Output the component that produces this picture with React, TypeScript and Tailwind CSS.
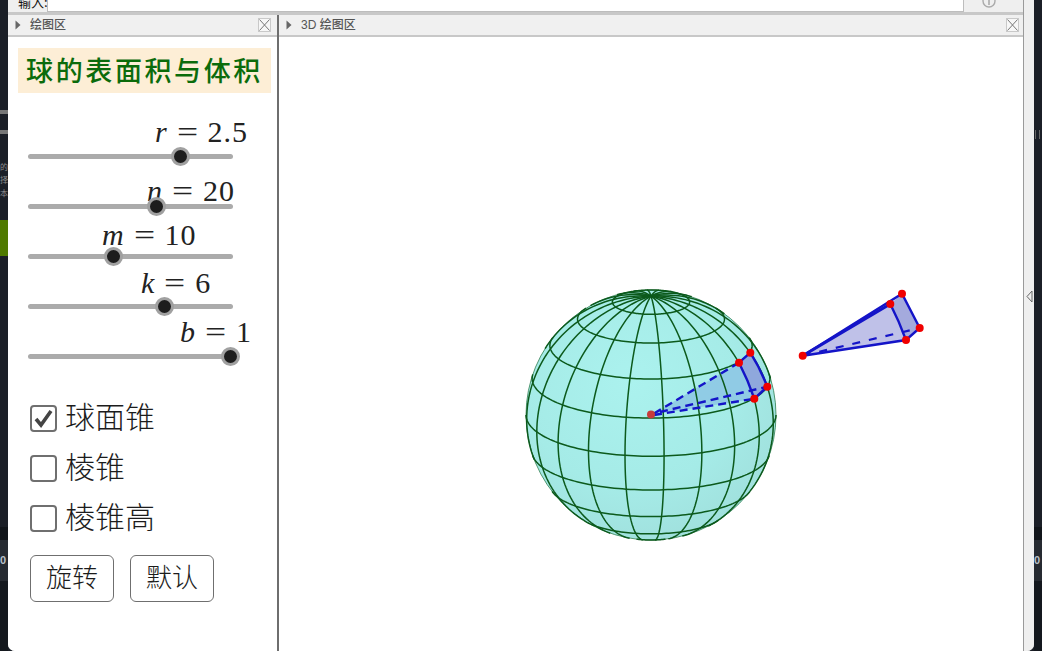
const CJK = "font-['Liberation_Serif','Noto_Sans_CJK_SC',serif]";

const R = 125;
const CX = 651;
const CY = 415;
const E = (17.8 * Math.PI) / 180;

function project(lat: number, lon: number) {
  const la = (lat * Math.PI) / 180;
  const lo = (lon * Math.PI) / 180;
  const x = Math.cos(la) * Math.sin(lo);
  const h = Math.sin(la);
  const d = Math.cos(la) * Math.cos(lo);
  const sy = d * Math.sin(E) - h * Math.cos(E);
  const depth = d * Math.cos(E) + h * Math.sin(E);
  const warp = 3.5 * (1 - sy * sy) * Math.max(depth, 0);
  return { x: CX + R * x, y: CY + R * sy + warp, depth };
}

function curve(samples: [number, number][]) {
  let out = "";
  let pen = false;
  for (const [lat, lon] of samples) {
    const p = project(lat, lon);
    if (p.depth >= -0.02) {
      out += `${pen ? "L" : "M"}${p.x.toFixed(2)} ${p.y.toFixed(2)}`;
      pen = true;
    } else pen = false;
  }
  return out;
}

const grid: string[] = [];
for (let k = 0; k < 20; k++) {
  const lon = 6 + 18 * k;
  const s: [number, number][] = [];
  for (let lat = 90; lat >= -90; lat -= 2) s.push([lat, lon]);
  grid.push(curve(s));
}
for (let lat = -72; lat <= 72; lat += 18) {
  const s: [number, number][] = [];
  for (let lon = -180; lon <= 180; lon += 2) s.push([lat, lon]);
  grid.push(curve(s));
}

const BLUE = "#1414c8";

function Dot({ x, y }: { x: number; y: number }) {
  return <circle cx={x} cy={y} r="4" fill="#f00000" />;
}

function Scene() {
  return (
    <svg viewBox="279 37 744 614" className="block w-full h-full">
      <defs>
        <radialGradient id="ball" cx="42%" cy="36%" r="72%">
          <stop offset="0%" stopColor="#abf2ee" />
          <stop offset="60%" stopColor="#a5ebe7" />
          <stop offset="100%" stopColor="#9fdedb" />
        </radialGradient>
      </defs>
      <circle cx={CX} cy={CY} r={R} fill="url(#ball)" stroke="#2f7d4f" strokeWidth="0.8" />
      {/* inner cone fill */}
      <polygon points="651,415 739,362.7 754.3,398.7" fill="#8cc6e4" fillOpacity="0.85" />
      <polygon points="739,362.7 750.3,352.7 767.3,386.7 754.3,398.7" fill="#8fa8dc" />
      <g fill="none" stroke="#0c5a1c" strokeWidth="1.5">
        {grid.map((d, i) => (
          <path key={i} d={d} />
        ))}
      </g>
      <polygon points="739,362.7 750.3,352.7 767.3,386.7 754.3,398.7" fill="#8fa8dc" fillOpacity="0.8" />
      {/* inner cone edges */}
      <g fill="none" stroke={BLUE} strokeWidth="2.4" strokeDasharray="8 5">
        <path d="M654 413.5 L739 362.7" />
        <path d="M654 415 L754.3 398.7" />
        <path d="M660 412 L767.3 386.7" />
      </g>
      <path
        d="M739 362.7 L750.3 352.7 Q760 368 767.3 386.7 L754.3 398.7 Q748 380 739 362.7"
        fill="none"
        stroke={BLUE}
        strokeWidth="2.4"
      />
      <circle cx="651" cy="414.5" r="4" fill="#c83a3a" />
      <Dot x={739} y={362.7} />
      <Dot x={750.3} y={352.7} />
      <Dot x={767.3} y={386.7} />
      <Dot x={754.3} y={398.7} />
      {/* detached cone */}
      <polygon points="802.7,355.7 890.3,304 906,340" fill="#bfc1e8" />
      <polygon points="890.3,304 902,293.7 919.7,328 906,340" fill="#a4aadd" />
      <path d="M802.7 355.7 L919.7 328" fill="none" stroke={BLUE} strokeWidth="2.2" strokeDasharray="8 9" />
      <path
        d="M802.7 355.7 L902 293.7 L919.7 328 L906 340 L802.7 355.7 M890.3 304 Q899 321 906 340"
        fill="none"
        stroke={BLUE}
        strokeWidth="2.4"
      />
      <path d="M802.7 355.7 L890.3 304" fill="none" stroke={BLUE} strokeWidth="3" />
      <Dot x={802.7} y={355.7} />
      <Dot x={890.3} y={304} />
      <Dot x={902} y={293.7} />
      <Dot x={919.7} y={328} />
      <Dot x={906} y={340} />
    </svg>
  );
}

function CloseIcon() {
  return (
    <svg width="13" height="14" viewBox="0 0 13 14" className="shrink-0">
      <rect x="0.5" y="0.5" width="12" height="13" fill="#f7f7f7" stroke="#c9c9c9" />
      <path d="M1.5 1.5 L11.5 12.5 M11.5 1.5 L1.5 12.5" stroke="#777" strokeWidth="1" />
    </svg>
  );
}

function PanelHeader({ title, gap, pad, right }: { title: string; gap: string; pad: string; right: string }) {
  return (
    <div className={`flex items-center h-[22px] shrink-0 bg-[#f0f0f0] border-b-2 border-[#c8c8c8] ${pad} ${right}`}>
      <svg width="6" height="10" viewBox="0 0 6 10" className="shrink-0">
        <path d="M0.5 0.5 L5.5 5 L0.5 9.5 Z" fill="#666" />
      </svg>
      <span
        className={`${gap} flex-1 text-[12px] leading-none font-medium text-[#555] font-['Liberation_Sans','Noto_Sans_CJK_SC',sans-serif]`}
      >
        {title}
      </span>
      <CloseIcon />
    </div>
  );
}

function Slider({
  at,
  label,
  value,
  offset,
  top,
}: {
  at: number;
  label: string;
  value: string;
  offset: string;
  top: string;
}) {
  return (
    <div className="relative flex flex-col h-[50px]">
      <div
        className={`relative z-0 h-[30px] leading-[30px] text-[30px] text-[#222] whitespace-nowrap shrink-0 font-['Liberation_Serif',serif] ${offset} ${top}`}
      >
        <span className="italic">{label}</span>
        <span className="inline-block mx-[12px] scale-x-[1.25]">=</span>
        <span className="tracking-[1px]">{value}</span>
      </div>
      <div className="absolute left-[20px] top-[22.5px] w-[205px] h-[5px] rounded-full bg-[#ababab]">
        <div
          className="absolute top-[-7px] w-[19px] h-[19px] rounded-full bg-[#1d1d1d] border-[3px] border-[#a0a0a0]"
          style={{ left: at - 28 - 9.5 }}
        />
      </div>
    </div>
  );
}

function Check({ label, checked }: { label: string; checked?: boolean }) {
  return (
    <div className="flex items-center h-[50px] pl-[22px]">
      <div className="flex items-center justify-center w-[27px] h-[27px] rounded-[4px] border-2 border-[#6f6f6f] bg-white shrink-0">
        {checked && (
          <svg width="21" height="21" viewBox="0 0 21 21">
            <path d="M3 11 L8 17 L18 3" fill="none" stroke="#444" strokeWidth="3.6" />
          </svg>
        )}
      </div>
      <span className={`ml-[8px] text-[30px] leading-none font-light text-[#1c1c1c] ${CJK}`}>{label}</span>
    </div>
  );
}

function Btn({ label }: { label: string }) {
  return (
    <button
      className={`w-[84px] h-[47px] rounded-[6px] border-[1.5px] border-[#6f6f6f] bg-white text-[26px] leading-none font-light text-[#1c1c1c] ${CJK}`}
    >
      {label}
    </button>
  );
}

function PeekBottom() {
  return (
    <>
      <div className="flex-1" />
      <div className="h-[13px] w-full bg-[#11151a] shrink-0" />
      <div className="flex items-center w-full h-[41px] bg-[#262a31] shrink-0 overflow-hidden">
        <span className="text-[11px] font-bold text-[#b9c0c8] font-['Liberation_Sans',sans-serif]">0</span>
      </div>
      <div className="h-[70px] w-full bg-[#14181e] shrink-0" />
    </>
  );
}

export default function App() {
  return (
    <div className="flex w-[1042px] h-[651px] overflow-hidden bg-[#1b1f27]">
      {/* background page peeking out, left */}
      <div className="flex flex-col w-[8px] shrink-0 overflow-hidden">
        <div className="h-[110px] shrink-0" />
        <div className="h-[4px] w-full bg-[#777] shrink-0" />
        <div className="h-[16px] shrink-0" />
        <div className="h-[4px] w-full bg-[#777] shrink-0" />
        <div className="h-[26px] shrink-0" />
        <div className="flex flex-col w-[8px] h-[39px] shrink-0 text-[8px] text-[#8a8a8a] font-['Noto_Sans_CJK_SC',sans-serif]">
          <span className="block h-[13px] leading-[13px]">的</span>
          <span className="block h-[13px] leading-[13px]">择</span>
          <span className="block h-[13px] leading-[13px]">本</span>
        </div>
        <div className="h-[21px] shrink-0" />
        <div className="h-[36px] w-full bg-[#4f7a00] shrink-0" />
        <PeekBottom />
      </div>

      {/* application window */}
      <div className="flex flex-1 min-w-0 overflow-hidden rounded-b-[7px] bg-[#efefef]">
        <div className="flex flex-col flex-1 min-w-0">
          <div className="flex items-start h-[12px] shrink-0 overflow-hidden">
            <span className="w-[39px] shrink-0 pl-[10px] text-[13px] leading-[13px] text-[#111] whitespace-nowrap -mt-[5px] font-['Noto_Sans_CJK_SC',sans-serif]">
              输入:
            </span>
            <div className="w-[917px] h-full shrink-0 bg-white border-l border-r border-b border-[#bdbdbd]" />
            <svg width="16" height="16" viewBox="0 0 16 16" className="ml-[17px] -mt-[7px] shrink-0">
              <circle cx="8" cy="8" r="6" fill="none" stroke="#aaa" strokeWidth="1.4" />
              <path d="M8 7 L8 12" stroke="#aaa" strokeWidth="1.6" />
            </svg>
          </div>
          <div className="h-[3px] shrink-0 bg-[#c8c8c8]" />

          <div className="flex flex-1 min-h-0">
            <div className="w-[269px] shrink-0 bg-white flex flex-col">
              <PanelHeader title="绘图区" gap="ml-[9px]" pad="pl-[7px]" right="pr-[6px]" />
              <div
                className={`mt-[11px] ml-[10px] w-[253px] h-[45px] pt-[3px] flex items-center justify-center bg-[#fdeed6] text-[27px] leading-none tracking-[2.6px] font-medium text-[#0b6b0b] whitespace-nowrap ${CJK}`}
              >
                球的表面积与体积
              </div>
              <div className="mt-[38px]">
                <Slider at={180.5} label="r" value="2.5" offset="ml-[147px]" top="-mt-[14px]" />
                <Slider at={156} label="n" value="20" offset="ml-[139px]" top="-mt-[5px]" />
                <Slider at={113} label="m" value="10" offset="ml-[94px]" top="-mt-[11px]" />
                <Slider at={164} label="k" value="6" offset="ml-[133px]" top="-mt-[13px]" />
                <Slider at={230} label="b" value="1" offset="ml-[172px]" top="-mt-[14px]" />
              </div>
              <div className="mt-[12px]">
                <Check label="球面锥" checked />
                <Check label="棱锥" />
                <Check label="棱锥高" />
              </div>
              <div className="flex gap-[16px] mt-[12px] ml-[22px]">
                <Btn label="旋转" />
                <Btn label="默认" />
              </div>
            </div>
            <div className="w-[2px] shrink-0 bg-[#6e6e6e]" />
            <div className="flex flex-col flex-1 min-w-0 bg-white">
              <PanelHeader title="3D 绘图区" gap="ml-[9px]" pad="pl-[7px]" right="pr-[4px]" />
              <div className="flex-1 min-h-0">
                <Scene />
              </div>
            </div>
          </div>
        </div>
        <div className="flex items-center justify-center w-[11px] shrink-0 border-l border-[#9a9a9a] bg-[#efefef]">
          <svg width="7" height="13" viewBox="0 0 7 13" className="-mt-[58px]">
            <path d="M6 1 L1 6.5 L6 12 Z" fill="none" stroke="#666" strokeWidth="1" />
          </svg>
        </div>
      </div>

      {/* background page peeking out, right */}
      <div className="flex flex-col w-[8px] shrink-0 overflow-hidden">
        <div className="h-[130px] shrink-0" />
        <div className="h-[9px] w-[5px] ml-[1px] border-l border-r border-[#666] shrink-0" />
        <PeekBottom />
      </div>
    </div>
  );
}
